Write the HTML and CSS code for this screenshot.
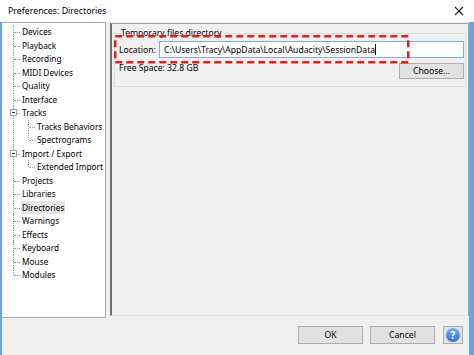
FILE: index.html
```html
<!DOCTYPE html>
<html lang="en">
<head>
    <meta charset="UTF-8">
    <meta name="viewport" content="width=device-width, initial-scale=1.0">
    <title>Preferences: Directories</title>
    <link rel="stylesheet" href="styles.css">
</head>
<body>

    <div class="window">
        <div class="titlebar">
            <span class="title">Preferences: Directories</span>
            <svg class="close" width="10" height="10" viewBox="0 0 10 10">
                <path d="M1 1 L9 9 M9 1 L1 9" stroke="#1a1a1a" stroke-width="1.1" fill="none"/>
            </svg>
        </div>

        <div class="dialog">
            <div class="main">
                <ul class="tree">
                    <li><span class="label">Devices</span></li>
                    <li><span class="label">Playback</span></li>
                    <li><span class="label">Recording</span></li>
                    <li><span class="label">MIDI Devices</span></li>
                    <li><span class="label">Quality</span></li>
                    <li><span class="label">Interface</span></li>
                    <li class="open">
                        <span class="toggle"></span>
                        <span class="label">Tracks</span>
                        <ul>
                            <li><span class="label">Tracks Behaviors</span></li>
                            <li><span class="label">Spectrograms</span></li>
                        </ul>
                    </li>
                    <li class="open">
                        <span class="toggle"></span>
                        <span class="label">Import / Export</span>
                        <ul>
                            <li><span class="label">Extended Import</span></li>
                        </ul>
                    </li>
                    <li><span class="label">Projects</span></li>
                    <li><span class="label">Libraries</span></li>
                    <li><span class="label selected">Directories</span></li>
                    <li><span class="label">Warnings</span></li>
                    <li><span class="label">Effects</span></li>
                    <li><span class="label">Keyboard</span></li>
                    <li><span class="label">Mouse</span></li>
                    <li><span class="label">Modules</span></li>
                </ul>

                <div class="page">
                    <fieldset class="group">
                        <legend>Temporary files directory</legend>
                        <div class="row">
                            <span class="field-label">Location:</span>
                            <div class="input">C:\Users\Tracy\AppData\Local\Audacity\SessionData<span class="caret"></span></div>
                        </div>
                        <div class="row row-space">
                            <span class="free">Free Space: 32.8 GB</span>
                            <button class="btn choose">Choose...</button>
                        </div>
                    </fieldset>

                    <!-- annotation drawn over the screenshot -->
                    <svg class="mark" width="296" height="29" viewBox="0 0 296 29">
                        <rect x="1.25" y="1.25" width="293" height="26" fill="none" stroke="#e31e1e" stroke-width="2.5" stroke-dasharray="7 4"/>
                    </svg>
                </div>
            </div>

            <div class="footer">
                <button class="btn">OK</button>
                <button class="btn">Cancel</button>
                <button class="btn help">
                    <span class="help-icon">?</span>
                </button>
            </div>
        </div>
    </div>

</body>
</html>
```

FILE: styles.css
```css
body {
    margin: 0;
    font-family: "Noto Sans", "Open Sans", sans-serif;
    font-size: 8.6px;
    color: #000;
    background-color: #fff;
}

.window {
    width: 474px;
    height: 355px;
    display: flex;
    flex-direction: column;
    overflow: hidden;
}

.titlebar {
    height: 22px;
    flex: none;
    display: flex;
    align-items: center;
    justify-content: space-between;
    padding: 0 10px 0 8px;
    background-color: #fff;
}

.title {
    font-size: 8.8px;
}

.close {
    display: block;
}

.dialog {
    flex: 1;
    display: flex;
    flex-direction: column;
    background-color: #f0f0f0;
    border-left: 2px solid #62a6e8;
    border-right: 5px solid #62a6e8;
}

.main {
    height: 296px;
    display: flex;
    gap: 4px;
}

/* tree on the left */
.tree {
    width: 104px;
    flex: none;
    margin: 0;
    padding: 2px 0 0 0;
    list-style: none;
    font-size: 8.3px;
    background-color: #fff;
    border-top: 1px solid #a8a8a8;
    border-right: 1px solid #a8a8a8;
    border-bottom: 1px solid #a8a8a8;
    box-sizing: border-box;
    overflow: hidden;
}

.tree ul {
    margin: 0;
    padding: 0;
    list-style: none;
}

.tree li {
    position: relative;
    padding-left: 19px;
    line-height: 13.5px;
    white-space: nowrap;
}

.tree li::before {
    content: '';
    position: absolute;
    left: 11px;
    top: 0;
    bottom: 0;
    border-left: 1px dotted #9a9a9a;
}

.tree li:last-child::before {
    bottom: auto;
    height: 7px;
}

.tree li::after {
    content: '';
    position: absolute;
    left: 12px;
    top: 7px;
    width: 6px;
    border-top: 1px dotted #9a9a9a;
}

.tree ul li {
    padding-left: 15px;
}

.tree ul li::before {
    left: 7px;
}

.tree ul li::after {
    left: 8px;
}

.label {
    display: inline-block;
    padding: 0 1px;
}

.label.selected {
    background-color: #e5e5e5;
}

.toggle {
    position: absolute;
    left: 8px;
    top: 3px;
    width: 7px;
    height: 7px;
    box-sizing: border-box;
    border: 1px solid #a0a0a0;
    background-color: #fff;
    z-index: 1;
}

.toggle::after {
    content: '';
    position: absolute;
    left: 1px;
    top: 2px;
    width: 3px;
    border-top: 1px solid #333;
}

/* settings page on the right */
.page {
    flex: 1;
    position: relative;
    height: 293px;
    margin-top: 1px;
    border-top: 1px solid #a0a0a0;
    border-left: 2px solid #6f6f6f;
    border-right: 1px solid #a0a0a0;
    border-bottom: 1px solid #e3e3e3;
    box-sizing: border-box;
}

.group {
    margin: 3px 2px 0 2px;
    padding: 0 1px 7px 4px;
    border: 1px solid #dcdcdc;
}

.group legend {
    padding: 0 2px;
    line-height: 12px;
}

.row {
    display: flex;
    align-items: center;
    margin-top: 2px;
}

.field-label {
    width: 40px;
}

.input {
    flex: 1;
    height: 17px;
    display: flex;
    align-items: center;
    padding-left: 4px;
    background-color: #fff;
    border: 1px solid #86acd6;
    box-sizing: border-box;
    white-space: nowrap;
    overflow: hidden;
}

.caret {
    display: inline-block;
    width: 1px;
    height: 11px;
    background-color: #000;
}

.row-space {
    justify-content: space-between;
    align-items: flex-start;
    margin-top: 5px;
}

.free {
    margin-top: -1px;
}

.btn {
    font-family: inherit;
    font-size: 8.6px;
    height: 18px;
    width: 65px;
    padding: 0;
    background-color: #e1e1e1;
    border: 1px solid #adadad;
    color: #000;
}

.btn.choose {
    height: 16px;
}

.mark {
    position: absolute;
    left: 2px;
    top: 11px;
}

/* buttons at the bottom */
.footer {
    flex: 1;
    display: flex;
    justify-content: flex-end;
    align-items: flex-start;
    gap: 7px;
    padding: 8px 6px 0 0;
}

.btn.help {
    width: 20px;
    display: flex;
    align-items: center;
    justify-content: center;
    margin-left: 1px;
}

.help-icon {
    width: 14px;
    height: 14px;
    border-radius: 50%;
    background: linear-gradient(#78b0f4, #2d6ed6);
    color: #fff;
    font-weight: bold;
    font-size: 10px;
    line-height: 14px;
    text-align: center;
}
```
